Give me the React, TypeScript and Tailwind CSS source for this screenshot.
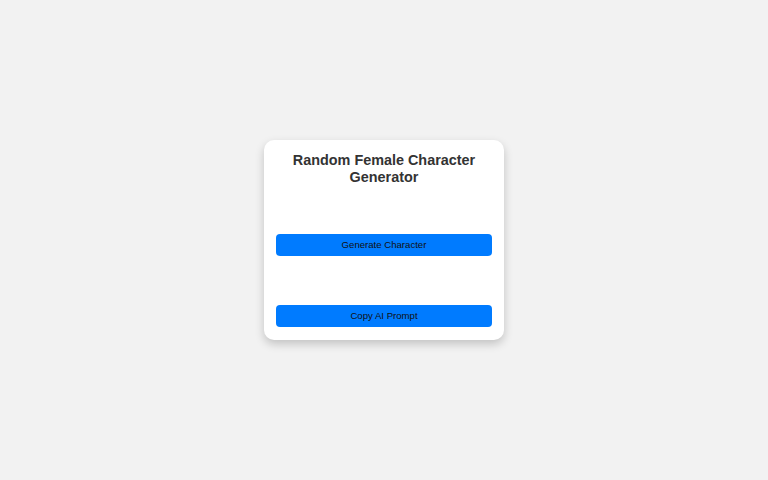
import React from 'react';

export default function App() {
  return (
    <div className="flex h-screen w-full items-center justify-center bg-[#f2f2f2] font-['Liberation_Sans',Arial,sans-serif]">
      <div className="flex w-[240px] flex-col rounded-[10px] bg-white px-3 pt-3 pb-[13px] shadow-[0_4px_10px_rgba(0,0,0,0.2)]">
        <h2 className="text-center text-[14.4px] font-bold leading-[17px] text-[#333]">
          Random Female Character Generator
        </h2>
        {/* character output */}
        <div className="h-12" />
        <button className="block h-[22px] w-full rounded bg-[#007bff] text-[9.6px] text-[#111]">
          Generate Character
        </button>
        {/* prompt output */}
        <div className="h-[49px]" />
        <button className="block h-[22px] w-full rounded bg-[#007bff] text-[9.6px] text-[#111]">
          Copy AI Prompt
        </button>
      </div>
    </div>
  );
}
